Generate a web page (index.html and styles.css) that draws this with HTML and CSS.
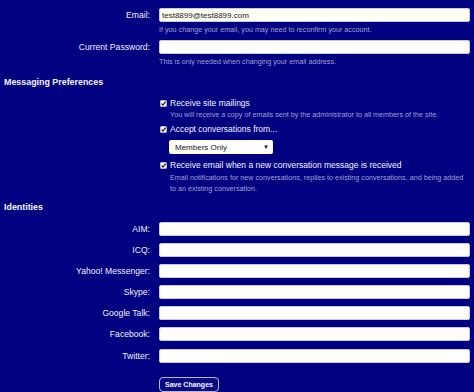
FILE: index.html
```html
<!DOCTYPE html>
<html>
<head>
<meta charset="utf-8">
<link rel="stylesheet" href="styles.css">
</head>
<body>
<form class="form">
  <div class="row">
    <label class="lbl">Email:</label>
    <div class="field">
      <input class="txt txt-focus" type="text" value="test8899@test8899.com">
      <p class="hint hint-tight">If you change your email, you may need to reconfirm your account.</p>
    </div>
  </div>
  <div class="row row-gap">
    <label class="lbl">Current Password:</label>
    <div class="field">
      <input class="txt" type="password">
      <p class="hint hint-tight">This is only needed when changing your email address.</p>
    </div>
  </div>

  <h3 class="section">Messaging Preferences</h3>

  <div class="row row-first">
    <div class="lbl"></div>
    <div class="field">
      <div class="check">
        <svg class="box" width="7" height="7" viewBox="0 0 7 7"><rect x="0.5" y="0.5" width="6" height="6" rx="0.8" fill="#fafafa" stroke="#b8b8c8"/><path d="M1.6 3.6 L3 5.1 L5.6 1.6" fill="none" stroke="#222" stroke-width="1.3"/></svg>
        <span>Receive site mailings</span>
      </div>
      <p class="hint hint-sub">You will receive a copy of emails sent by the administrator to all members of the site.</p>
      <div class="check check-next">
        <svg class="box" width="7" height="7" viewBox="0 0 7 7"><rect x="0.5" y="0.5" width="6" height="6" rx="0.8" fill="#fafafa" stroke="#b8b8c8"/><path d="M1.6 3.6 L3 5.1 L5.6 1.6" fill="none" stroke="#222" stroke-width="1.3"/></svg>
        <span>Accept conversations from...</span>
      </div>
      <div class="select">
        <span>Members Only</span>
        <span class="arrow">&#9660;</span>
      </div>
      <div class="check check-after">
        <svg class="box" width="7" height="7" viewBox="0 0 7 7"><rect x="0.5" y="0.5" width="6" height="6" rx="0.8" fill="#fafafa" stroke="#b8b8c8"/><path d="M1.6 3.6 L3 5.1 L5.6 1.6" fill="none" stroke="#222" stroke-width="1.3"/></svg>
        <span>Receive email when a new conversation message is received</span>
      </div>
      <p class="hint hint-sub hint-multi">Email notifications for new conversations, replies to existing conversations, and being added to an existing conversation.</p>
    </div>
  </div>

  <h3 class="section section-ident">Identities</h3>

  <div class="idents">
    <div class="row row-c"><label class="lbl">AIM:</label><div class="field"><input class="txt" type="text"></div></div>
    <div class="row row-c"><label class="lbl">ICQ:</label><div class="field"><input class="txt" type="text"></div></div>
    <div class="row row-c"><label class="lbl">Yahoo! Messenger:</label><div class="field"><input class="txt" type="text"></div></div>
    <div class="row row-c"><label class="lbl">Skype:</label><div class="field"><input class="txt" type="text"></div></div>
    <div class="row row-c"><label class="lbl">Google Talk:</label><div class="field"><input class="txt" type="text"></div></div>
    <div class="row row-c"><label class="lbl">Facebook:</label><div class="field"><input class="txt" type="text"></div></div>
    <div class="row row-c"><label class="lbl">Twitter:</label><div class="field"><input class="txt" type="text"></div></div>
  </div>

  <div class="row row-btn">
    <div class="lbl"></div>
    <div class="field"><button class="btn" type="button">Save Changes</button></div>
  </div>
</form>
</body>
</html>
```

FILE: styles.css
```css
html, body {
  margin: 0;
  padding: 0;
  background: #000080;
}
body {
  width: 474px;
  height: 392px;
  overflow: hidden;
  font-family: "Liberation Sans", Arial, sans-serif;
  color: #f0f0fa;
}
.form {
  padding: 8px 4px 0 0;
  margin: 0;
}
.row {
  display: flex;
  gap: 9px;
}
.row-gap { margin-top: 5.5px; }
.row-first { margin-top: 10px; }
.row-c { align-items: center; }
.lbl {
  flex: none;
  width: 150px;
  text-align: right;
  font-size: 8.6px;
  line-height: 14px;
  color: #f0f0fa;
}
.field {
  flex: 1;
  min-width: 0;
}
.txt {
  display: block;
  box-sizing: border-box;
  width: 100%;
  height: 14px;
  margin: 0;
  padding: 0 2px;
  border: 1px solid #c8c8e0;
  border-radius: 2px;
  background: #fdfdfb;
  font-family: "Liberation Sans", Arial, sans-serif;
  font-size: 8px;
  color: #222;
  outline: none;
}
.txt-focus { background: #fffff2; }
.hint {
  margin: 0;
  font-size: 7.2px;
  line-height: 11px;
  color: #a0a0d4;
}
.hint-tight { margin-top: 1.5px; }
.hint-sub { padding-left: 11px; }
.hint-multi { margin-top: 1px; }
.section {
  margin: 10px 0 0 4px;
  font-size: 8.9px;
  line-height: 11px;
  font-weight: bold;
  color: #f4f4ff;
}
.section-ident { margin-top: 8px; }
.check {
  display: flex;
  align-items: center;
  gap: 3px;
  padding-left: 1px;
  font-size: 8.5px;
  line-height: 11px;
  color: #f4f4ff;
}
.check-next { margin-top: 4px; }
.check-after { margin-top: 5.5px; }
.box { flex: none; }
.select {
  display: flex;
  justify-content: space-between;
  align-items: center;
  box-sizing: border-box;
  width: 104px;
  height: 14px;
  margin: 5.5px 0 0 10px;
  padding: 0 4px 0 6px;
  background: #fdfdfb;
  border-radius: 2px;
  font-size: 8px;
  color: #222;
}
.arrow { font-size: 6px; color: #111; }
.idents {
  margin-top: 9.5px;
  display: flex;
  flex-direction: column;
  gap: 7.1px;
}
.row-btn { margin-top: 10px; }
.btn {
  box-sizing: border-box;
  width: 60px;
  height: 15px;
  margin: 0;
  padding: 0;
  background: #0a0a86;
  border: 1px solid #b8b8e0;
  border-radius: 4px;
  font-family: "Liberation Sans", Arial, sans-serif;
  font-size: 7px;
  font-weight: bold;
  color: #f4f4ff;
}
```
